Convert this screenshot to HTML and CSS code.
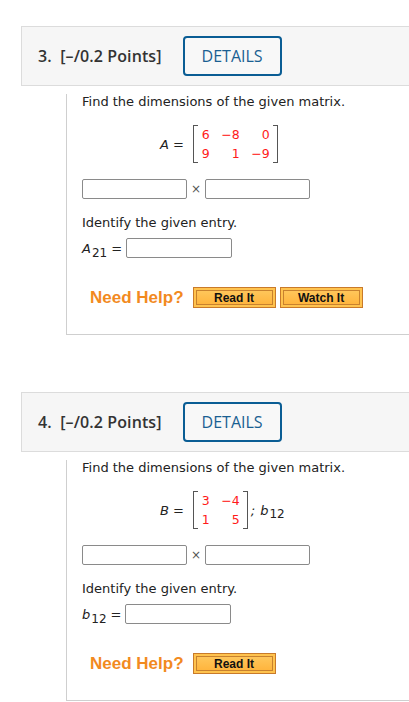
FILE: index.html
```html
<!DOCTYPE html>
<html>
<head>
<meta charset="utf-8">
<link rel="stylesheet" href="styles.css">
</head>
<body>
<div class="question">
  <div class="q-header">
    <span class="q-title">3.&nbsp; [–/0.2 Points]</span>
    <span class="details">DETAILS</span>
  </div>
  <div class="q-body">
    <p class="prompt">Find the dimensions of the given matrix.</p>
    <div class="math-row">
      <span class="var">A</span><span class="eq">=</span>
      <span class="matrix">
        <span class="br br-l"></span>
        <span class="cells cols3">
          <span class="c first">6</span><span class="c">−8</span><span class="c">0</span>
          <span class="c first">9</span><span class="c">1</span><span class="c">−9</span>
        </span>
        <span class="br br-r"></span>
      </span>
    </div>
    <div class="dims">
      <span class="box"></span><span class="times">×</span><span class="box"></span>
    </div>
    <p class="identify">Identify the given entry.</p>
    <div class="entry">
      <span class="var">A</span><span class="sub">21</span><span class="eq2">=</span><span class="box"></span>
    </div>
    <div class="help">
      <span class="need">Need Help?</span>
      <span class="btn"><span class="btn-in">Read It</span></span>
      <span class="btn"><span class="btn-in">Watch It</span></span>
    </div>
  </div>
</div>

<div class="question q2">
  <div class="q-header">
    <span class="q-title">4.&nbsp; [–/0.2 Points]</span>
    <span class="details">DETAILS</span>
  </div>
  <div class="q-body">
    <p class="prompt">Find the dimensions of the given matrix.</p>
    <div class="math-row">
      <span class="var">B</span><span class="eq">=</span>
      <span class="matrix">
        <span class="br br-l"></span>
        <span class="cells cols2">
          <span class="c first">3</span><span class="c">−4</span>
          <span class="c first">1</span><span class="c">5</span>
        </span>
        <span class="br br-r"></span>
      </span>
      <span class="semi">;</span><span class="var var-b">b</span><span class="sub sub-m">12</span>
    </div>
    <div class="dims">
      <span class="box"></span><span class="times">×</span><span class="box"></span>
    </div>
    <p class="identify">Identify the given entry.</p>
    <div class="entry">
      <span class="var">b</span><span class="sub">12</span><span class="eq2">=</span><span class="box"></span>
    </div>
    <div class="help">
      <span class="need">Need Help?</span>
      <span class="btn"><span class="btn-in">Read It</span></span>
    </div>
  </div>
</div>
</body>
</html>
```
FILE: styles.css
```css
html, body {
  margin: 0;
  padding: 0;
  background: #ffffff;
}
body {
  font-family: "DejaVu Sans", Verdana, sans-serif;
  font-size: 13px;
  color: #222;
  overflow: hidden;
}
.question {
  margin: 26px 0 0 21px;
}
.q2 {
  margin-top: 57px;
}
.q-header {
  height: 58px;
  background: #f6f6f6;
  border: 1px solid #dcdcdc;
  border-right: none;
  display: flex;
  align-items: center;
  padding-left: 16px;
}
.q-title {
  font-family: "Open Sans", sans-serif;
  font-weight: 600;
  font-size: 16px;
  color: #333;
  letter-spacing: 0.1px;
}
.details {
  margin-left: 21px;
  width: 95px;
  height: 36px;
  box-sizing: content-box;
  border: 2px solid #0a5d94;
  border-radius: 4px;
  display: flex;
  align-items: center;
  justify-content: center;
  font-family: "Open Sans", sans-serif;
  font-size: 16px;
  font-weight: 500;
  color: #1a5f92;
  background: #f8f8f8;
}
.q-body {
  margin-left: 45px;
  border-left: 1px solid #cfcfcf;
  border-bottom: 1px solid #cfcfcf;
  padding: 0 0 26px 15px;
}
.prompt, .identify {
  margin: 8px 0 0;
  line-height: 16px;
}
.identify {
  margin-top: 16px;
}
.math-row {
  margin: 15px 0 0 78px;
  height: 38px;
  display: flex;
  align-items: center;
}
.var {
  font-style: italic;
  color: #222;
}
.eq {
  margin: 0 9px 0 4px;
}
.matrix {
  display: flex;
  align-items: stretch;
  height: 38px;
}
.br {
  width: 4px;
  border: 1.5px solid #555;
}
.br-l { border-right: none; }
.br-r { border-left: none; }
.cells {
  display: grid;
  grid-auto-rows: 19px;
  align-items: center;
  color: #ff1a1a;
  font-size: 12.5px;
  padding: 0 3px 0 4px;
  column-gap: 10px;
}
.cols3 { grid-template-columns: auto 20px 20px; }
.cols2 { grid-template-columns: auto 20px; }
.c { text-align: right; }
.c.first { text-align: left; }
.semi {
  margin-left: 3px;
  font-style: italic;
}
.var-b {
  margin-left: 5px;
}
.sub {
  font-size: 12px;
  position: relative;
  top: 5px;
  margin-left: 1px;
}
.sub-m { top: 4px; }
.dims {
  margin-top: 16px;
  display: flex;
  align-items: center;
  height: 20px;
}
.box {
  display: inline-block;
  width: 103px;
  height: 18px;
  border: 1px solid #8a8a8a;
  border-radius: 2px;
  background: #fff;
}
.times {
  color: #555;
  font-size: 12px;
  width: 18px;
  text-align: center;
}
.entry {
  margin-top: 7px;
  display: flex;
  align-items: center;
  height: 20px;
}
.eq2 {
  margin: 0 4px 0 4px;
}
.entry .box {
  width: 104px;
}
.help {
  margin-top: 29px;
  display: flex;
  align-items: center;
  padding-left: 8px;
  height: 21px;
}
.need {
  font-family: "Liberation Sans", Arial, sans-serif;
  font-weight: bold;
  font-size: 17px;
  color: #f28a1f;
  margin-right: 9px;
}
.btn {
  width: 81px;
  height: 19px;
  border: 1px solid #c97a2a;
  background: #ffc34e;
  padding: 0;
  display: flex;
  margin-right: 4px;
}
.btn-in {
  flex: 1;
  margin: 2px;
  border: 1px solid #c8812e;
  background: linear-gradient(#ffc65a, #ffb53e);
  display: flex;
  align-items: center;
  justify-content: center;
  font-family: "Liberation Sans", Arial, sans-serif;
  font-weight: bold;
  font-size: 12px;
  color: #111;
}
```
